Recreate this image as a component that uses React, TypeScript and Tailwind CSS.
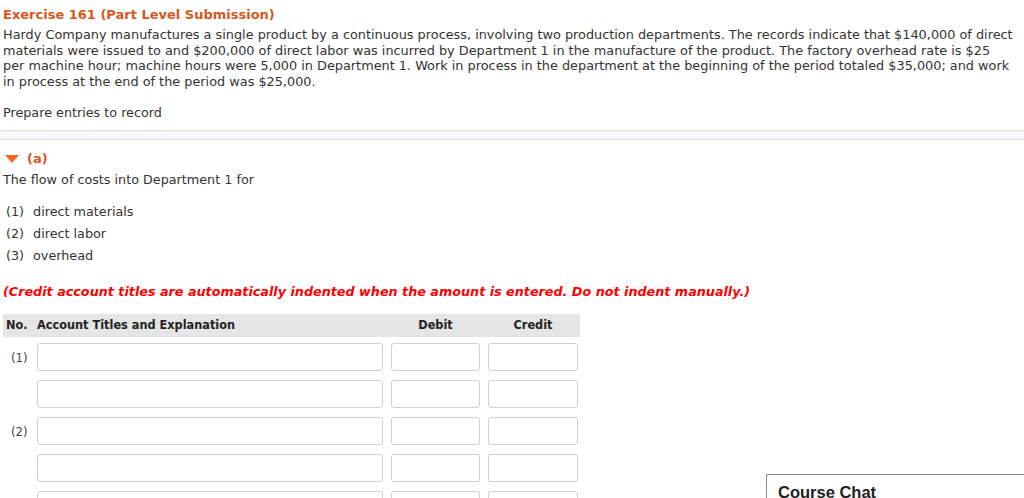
const verdana = { fontFamily: '"DejaVu Sans", Verdana, sans-serif' }
const tahoma = { fontFamily: '"DejaVu Sans Condensed", Tahoma, sans-serif' }

function EntryRow({ label }: { label?: string }) {
  return (
    <div className="flex items-center h-[28px] mb-[9px]">
      <div className="w-[34px] pl-[8px] text-[13px] text-[#444]" style={tahoma}>
        {label}
      </div>
      <div className="w-[346px] h-[28px] border border-[#cfcfcf] rounded-[3px] bg-white" />
      <div className="w-[89px] h-[28px] ml-[8px] border border-[#cfcfcf] rounded-[3px] bg-white" />
      <div className="w-[90px] h-[28px] ml-[8px] border border-[#cfcfcf] rounded-[3px] bg-white" />
    </div>
  )
}

export default function App() {
  return (
    <div className="relative h-[498px] overflow-hidden bg-white text-[#333] text-[12.75px]" style={verdana}>
      {/* Problem statement */}
      <div className="px-[3px] pt-[7px]">
        <h1 className="font-bold text-[13px] text-[#d9571c] leading-[16px]">Exercise 161 (Part Level Submission)</h1>
        <p className="mt-[4px] leading-[15.6px] text-[12.85px] whitespace-nowrap">
          Hardy Company manufactures a single product by a continuous process, involving two production departments. The records indicate that $140,000 of direct
          <br />
          materials were issued to and $200,000 of direct labor was incurred by Department 1 in the manufacture of the product. The factory overhead rate is $25
          <br />
          per machine hour; machine hours were 5,000 in Department 1. Work in process in the department at the beginning of the period totaled $35,000; and work
          <br />
          in process at the end of the period was $25,000.
        </p>
        <p className="mt-[16px] leading-[16px]">Prepare entries to record</p>
      </div>

      {/* Separator band */}
      <div className="mt-[9px] h-[10px] border-t border-b border-[#d9e0ea] bg-[#f6f8fb]" />

      {/* Part (a) */}
      <div className="px-[3px] pt-[11px]">
        <div className="flex items-center gap-[8px] leading-[16px]">
          <svg width="14" height="10" viewBox="0 0 14 10" className="ml-[2px]">
            <polygon points="0,1 14,1 7,9" fill="#f26522" />
          </svg>
          <span className="font-bold text-[13px] text-[#d9571c]">(a)</span>
        </div>
        <p className="mt-[5px] leading-[16px]">The flow of costs into Department 1 for</p>

        <div className="mt-[16px] pl-[3px] flex flex-col gap-[6px] leading-[16px]">
          <div className="flex gap-[9px]"><span>(1)</span><span>direct materials</span></div>
          <div className="flex gap-[9px]"><span>(2)</span><span>direct labor</span></div>
          <div className="flex gap-[9px]"><span>(3)</span><span>overhead</span></div>
        </div>

        <p className="mt-[20px] leading-[16px] font-bold italic text-[#ff0000]">
          (Credit account titles are automatically indented when the amount is entered. Do not indent manually.)
        </p>

        {/* Journal table */}
        <div className="mt-[14px] w-[577px]">
          <div className="flex items-center h-[23px] bg-[#e5e5e5] font-bold text-[12.6px] text-[#222]" style={tahoma}>
            <span className="w-[34px] pl-[3px]">No.</span>
            <span className="w-[354px]">Account Titles and Explanation</span>
            <span className="w-[89px] text-center">Debit</span>
            <span className="w-[90px] ml-[8px] text-center">Credit</span>
          </div>
          <div className="mt-[6px]">
            <EntryRow label="(1)" />
            <EntryRow />
            <EntryRow label="(2)" />
            <EntryRow />
            <EntryRow label="(3)" />
          </div>
        </div>
      </div>

      {/* Course chat widget */}
      <div className="absolute left-[766px] top-[474px] w-[270px] h-[60px] border border-[#8a8a8a] bg-white">
        <div
          className="pl-[11px] pt-[5px] text-[16.5px] font-bold text-[#222]"
          style={{ fontFamily: '"Liberation Sans", Arial, sans-serif' }}
        >
          Course Chat
        </div>
      </div>
    </div>
  )
}
